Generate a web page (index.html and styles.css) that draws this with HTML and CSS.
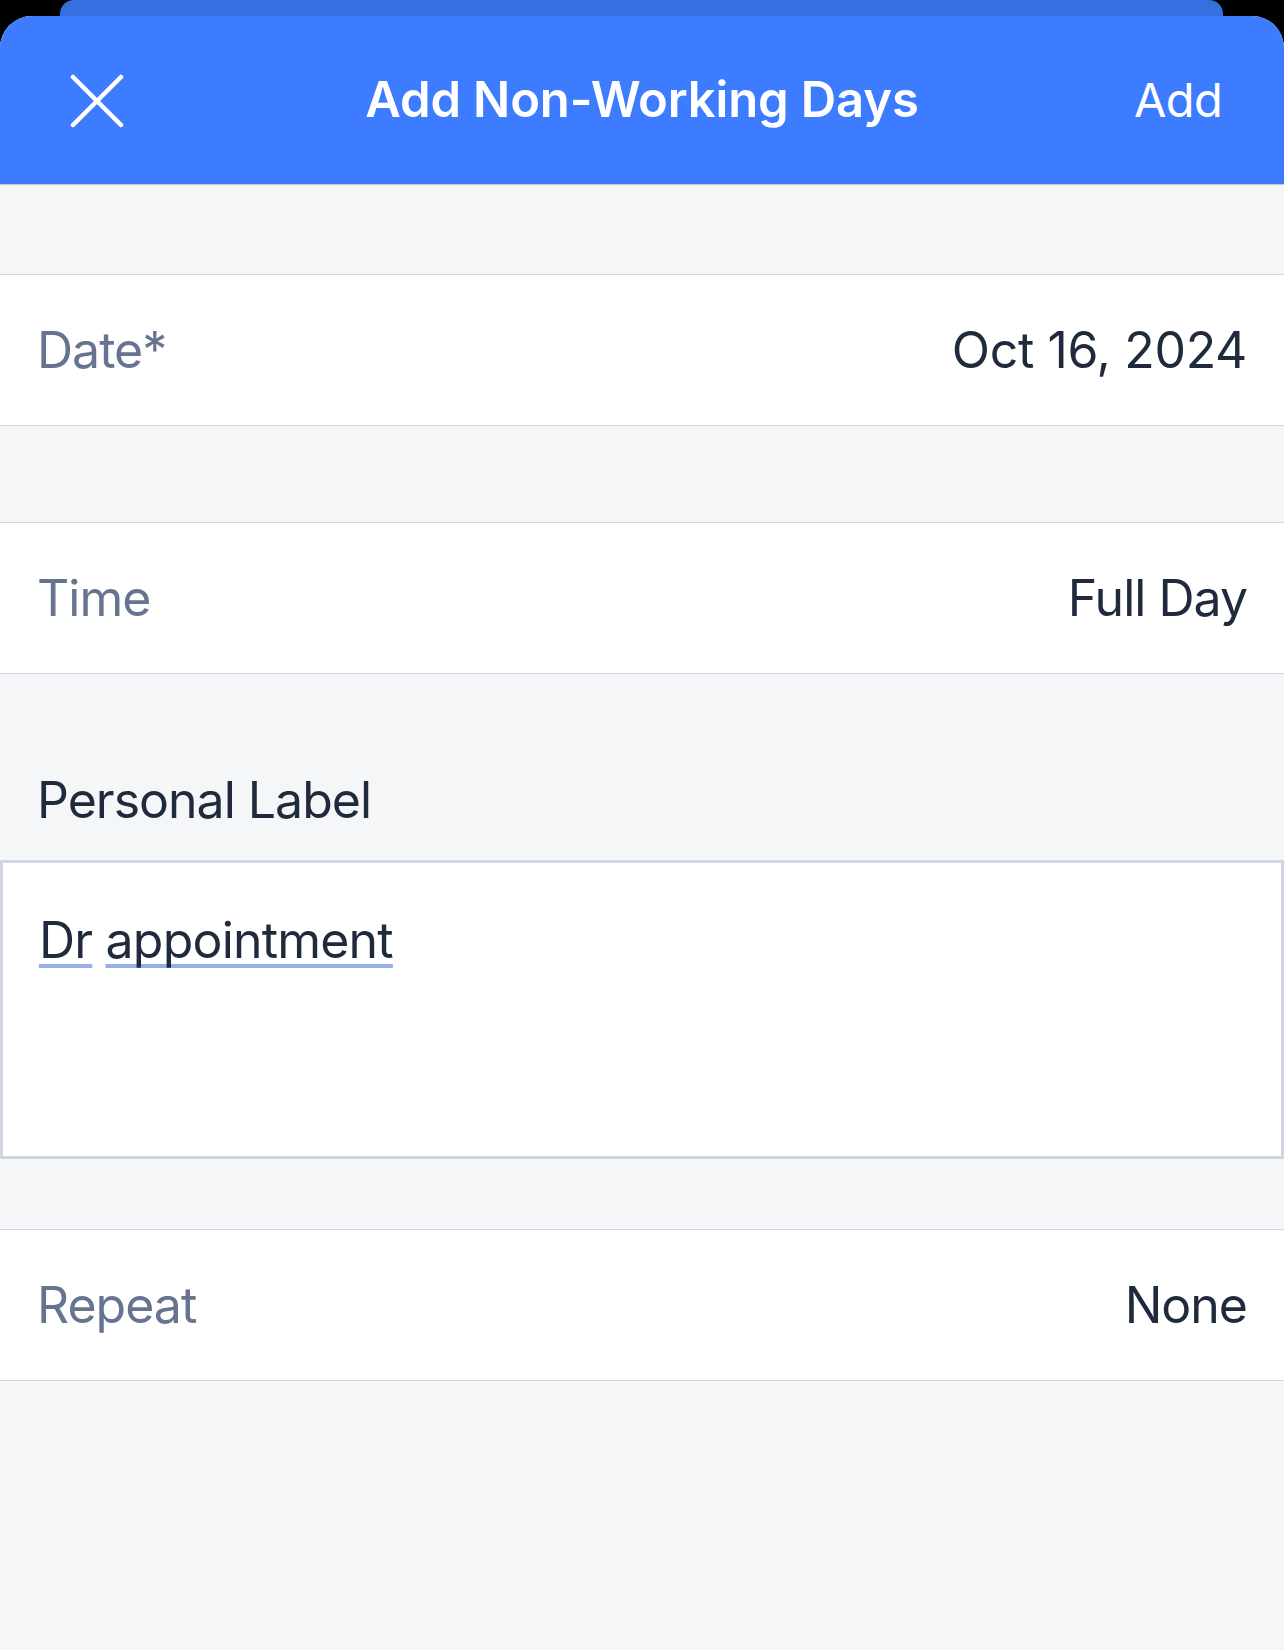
FILE: index.html
```html
<!DOCTYPE html>
<html lang="en">
<head>
<meta charset="utf-8">
<title>Add Non-Working Days</title>
<link rel="stylesheet" href="styles.css">
</head>
<body>
<div class="back-card"></div>
<main class="sheet">
  <header class="topbar">
    <div class="topbar-left">
      <svg class="close-icon" width="54" height="54" viewBox="0 0 54 54" aria-label="Close">
        <path d="M3 3 L51 51 M51 3 L3 51" stroke="#ffffff" stroke-width="4.5" stroke-linecap="round" fill="none"/>
      </svg>
    </div>
    <h1 class="title">Add Non-Working Days</h1>
    <div class="topbar-right">Add</div>
  </header>

  <section class="content">
    <div class="row row-date">
      <span class="row-label">Date*</span>
      <span class="row-value date-value">Oct 16, 2024</span>
    </div>

    <div class="row row-time">
      <span class="row-label">Time</span>
      <span class="row-value">Full Day</span>
    </div>

    <div class="field-label">Personal Label</div>
    <div class="text-box"><span class="spell">Dr</span> <span class="spell">appointment</span></div>

    <div class="row row-repeat">
      <span class="row-label">Repeat</span>
      <span class="row-value">None</span>
    </div>
  </section>
</main>
</body>
</html>
```

FILE: styles.css
```css
html, body {
  margin: 0;
  padding: 0;
}

body {
  background: #000000;
  font-family: "Inter", "Noto Sans", "Liberation Sans", sans-serif;
  width: 1284px;
  height: 1650px;
  overflow: hidden;
}

.back-card {
  height: 16px;
  margin: 0 61px 0 60px;
  background: #366fdf;
  border-radius: 14px 14px 0 0;
}

.sheet {
  background: #f4f6f8;
  border-radius: 32px 32px 0 0;
  overflow: hidden;
  height: 1634px;
}

.topbar {
  height: 169px;
  box-sizing: border-box;
  background: #3d7cff;
  border-bottom: 1px solid #c4c8d0;
  display: grid;
  grid-template-columns: 1fr auto 1fr;
  align-items: center;
  color: #ffffff;
}

.topbar-left {
  padding-left: 70px;
  display: flex;
  align-items: center;
  padding-top: 2px;
}

.close-icon {
  display: block;
}

.title {
  margin: 0;
  font-size: 49px;
  font-weight: 600;
  letter-spacing: -0.15px;
  line-height: 60px;
}

.topbar-right {
  text-align: right;
  padding-right: 62px;
  font-size: 47px;
  font-weight: 400;
  letter-spacing: -0.7px;
  line-height: 60px;
}

.content {
  padding-top: 89px;
}

.row {
  height: 152px;
  box-sizing: border-box;
  background: #ffffff;
  border-top: 1px solid #d1d7e1;
  border-bottom: 1px solid #d1d7e1;
  display: flex;
  justify-content: space-between;
  align-items: center;
  padding: 0 37px 0 37px;
  font-size: 50px;
  line-height: 60px;
  letter-spacing: -1px;
}

.row-time {
  margin-top: 96px;
}

.row-label {
  color: #667490;
}

.row-value {
  color: #1f2a3c;
}

.date-value {
  letter-spacing: -0.35px;
}

.field-label {
  padding: 96px 37px 30px 37px;
  font-size: 50px;
  line-height: 60px;
  letter-spacing: -1px;
  color: #1f2a3c;
}

.text-box {
  height: 299px;
  box-sizing: border-box;
  background: #ffffff;
  border: 3px solid #cfd6e1;
  padding: 47px 37px 0 36px;
  font-size: 50px;
  line-height: 60px;
  letter-spacing: -0.8px;
  color: #1f2a3c;
}

.spell {
  text-decoration: underline;
  text-decoration-color: #9aaee8;
  text-decoration-thickness: 4px;
  text-underline-offset: 6px;
  text-decoration-skip-ink: none;
}

.row-repeat {
  margin-top: 70px;
}
```
